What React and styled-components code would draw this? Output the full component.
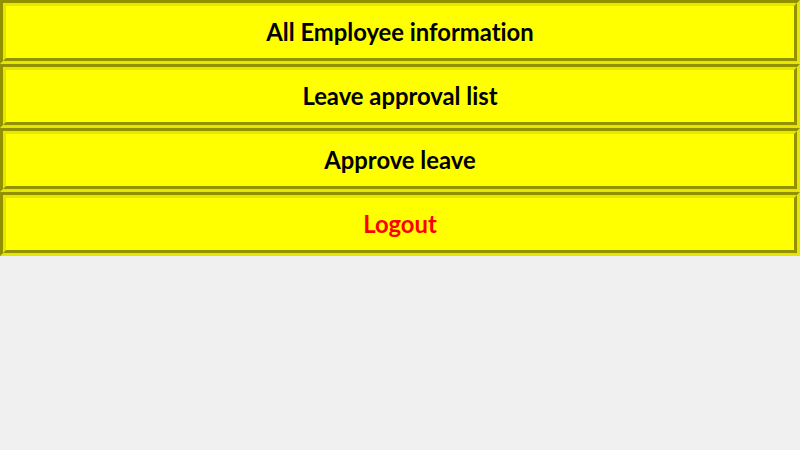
import React from 'react'
import styled, { createGlobalStyle } from 'styled-components'

const GlobalStyle = createGlobalStyle`
  html, body {
    margin: 0;
    padding: 0;
    background: #f0f0f0;
  }
`

const Menu = styled.nav`
  display: flex;
  flex-direction: column;
  width: 800px;
`

const MenuButton = styled.button`
  display: flex;
  align-items: center;
  justify-content: center;
  box-sizing: border-box;
  width: 100%;
  height: 64px;
  margin: 0;
  padding: 0;
  background: #ffff00;
  border: 6px groove #e6e600;
  color: ${props => (props.$danger ? '#ff0000' : '#000000')};
  font-family: Lato, "Open Sans", sans-serif;
  font-weight: 700;
  font-size: 23.8px;
  font-variant-ligatures: none;
  cursor: pointer;
`

const items = [
  { label: 'All Employee information' },
  { label: 'Leave approval list' },
  { label: 'Approve leave' },
  { label: 'Logout', danger: true },
]

export default function App() {
  return (
    <>
      <GlobalStyle />
      <Menu>
        {items.map(item => (
          <MenuButton key={item.label} $danger={item.danger}>
            {item.label}
          </MenuButton>
        ))}
      </Menu>
    </>
  )
}
